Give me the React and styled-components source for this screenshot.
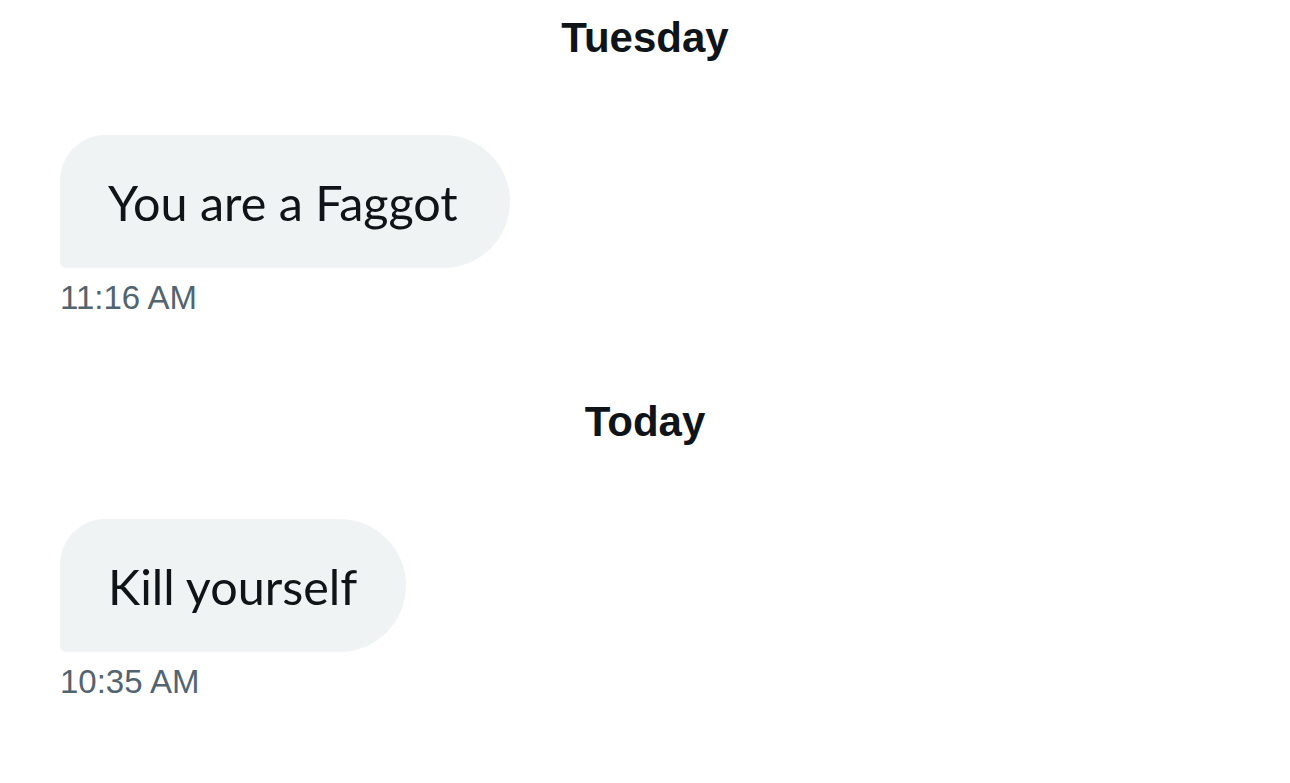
import React from "react";
import styled, { createGlobalStyle } from "styled-components";

const GlobalStyle = createGlobalStyle`
  body {
    margin: 0;
    background: #ffffff;
  }
`;

const Page = styled.div`
  width: 1290px;
  height: 783px;
  overflow: hidden;
  display: flex;
  flex-direction: column;
  padding: 0 60px;
  box-sizing: border-box;
`;

// date divider
const Day = styled.div`
  text-align: center;
  font-family: "Liberation Sans", Arial, sans-serif;
  font-weight: 700;
  font-size: 42px;
  line-height: 48px;
  color: #0f1419;
  margin-top: ${(p) => p.top}px;
  height: 48px;
`;

const Message = styled.div`
  display: flex;
  flex-direction: column;
  align-items: flex-start;
  margin-top: 73px;
`;

const Bubble = styled.div`
  display: flex;
  align-items: center;
  height: 133px;
  box-sizing: border-box;
  padding: 0 ${(p) => p.right || 52}px 0 48px;
  background: #eff3f4;
  border-radius: 46px 67px 67px 6px;
  font-family: Lato, "Noto Sans", sans-serif;
  font-size: 48.5px;
  color: #0f1419;
`;

const Time = styled.div`
  font-family: "Liberation Sans", Arial, sans-serif;
  font-size: 33px;
  line-height: 40px;
  color: #536471;
  margin-top: 10px;
`;

const App = () => {
  return (
    <>
      <GlobalStyle />
      <Page>
        <Day top={14}>Tuesday</Day>
        <Message>
          <Bubble>You are a Faggot</Bubble>
          <Time>11:16 AM</Time>
        </Message>
        <Day top={80}>Today</Day>
        <Message>
          <Bubble right={49}>Kill yourself</Bubble>
          <Time>10:35 AM</Time>
        </Message>
      </Page>
    </>
  );
};

export default App;
